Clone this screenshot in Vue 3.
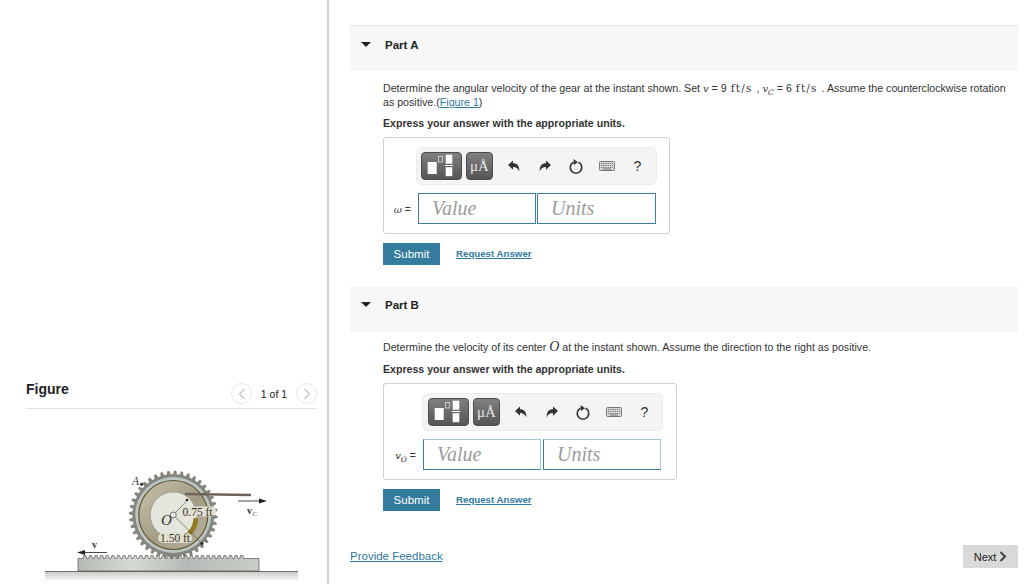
<script setup>
const parts = [
  { name: 'Part A', id: 'a', labelWidth: 34 },
  { name: 'Part B', id: 'b', labelWidth: 39 },
]

const cx = 133.3
const cy = 50

// gear outline: teeth round the wheel
function gearPath(count, root, tip) {
  let d = ''
  for (let i = 0; i < count; i++) {
    const step = (Math.PI * 2) / count
    const a = i * step
    const pts = [
      [root, a],
      [tip, a + step * 0.15],
      [tip, a + step * 0.4],
      [root, a + step * 0.55],
    ]
    pts.forEach(([r, t], n) => {
      const x = (cx + r * Math.cos(t)).toFixed(2)
      const y = (cy + r * Math.sin(t)).toFixed(2)
      d += (i === 0 && n === 0 ? 'M' : 'L') + x + ' ' + y + ' '
    })
  }
  return d + 'Z'
}

function rackPath() {
  let d = 'M38 93.5 L43 93.5 '
  for (let x = 43; x < 203; x += 5.6) {
    d += `L${(x + 0.8).toFixed(1)} 90.6 L${(x + 3).toFixed(1)} 90.6 L${(x + 3.8).toFixed(1)} 93.5 L${(x + 5.6).toFixed(1)} 93.5 `
  }
  return d + 'L219 93.5 L219 106 L38 106 Z'
}

const gear = gearPath(40, 40.5, 44)
const rack = rackPath()
</script>

<template>
  <div class="page">
    <aside class="left">
      <div class="figure-head">
        <span class="figure-title">Figure</span>
        <div class="pager">
          <span class="round">
            <svg width="8" height="12" viewBox="0 0 8 12"><path d="M6.5 1 L1.5 6 L6.5 11" fill="none" stroke="#c4c4c4" stroke-width="1.3" /></svg>
          </span>
          <span class="count">1 of 1</span>
          <span class="round">
            <svg width="8" height="12" viewBox="0 0 8 12"><path d="M1.5 1 L6.5 6 L1.5 11" fill="none" stroke="#c4c4c4" stroke-width="1.3" /></svg>
          </span>
        </div>
      </div>

      <svg class="figure" width="265" height="119" viewBox="0 0 265 119">
        <defs>
          <linearGradient id="rackFill" x1="0" x2="1" y1="0" y2="0">
            <stop offset="0" stop-color="#b4bab4" />
            <stop offset="0.3" stop-color="#d6dad4" />
            <stop offset="0.6" stop-color="#b5bbb6" />
            <stop offset="1" stop-color="#c9cdc8" />
          </linearGradient>
          <linearGradient id="rimFill" x1="0" x2="1" y1="0" y2="1">
            <stop offset="0" stop-color="#c7c1ab" />
            <stop offset="0.55" stop-color="#a39c85" />
            <stop offset="1" stop-color="#b9b5a2" />
          </linearGradient>
          <linearGradient id="groundFill" x1="0" x2="0" y1="0" y2="1">
            <stop offset="0" stop-color="#c4c6c2" />
            <stop offset="1" stop-color="#f4f4f2" />
          </linearGradient>
        </defs>

        <rect x="5" y="106" width="253" height="9" fill="url(#groundFill)" />
        <path d="M5 106.5 H258" stroke="#6f716d" stroke-width="1.2" />
        <path d="M12 109.5 H250" stroke="#e4e6e2" stroke-width="1" stroke-dasharray="2 5" />

        <path :d="gear" fill="#85877f" stroke="#5a5b54" stroke-width="0.4" />
        <circle :cx="cx" :cy="cy" r="38" fill="#bcc5c6" />
        <circle :cx="cx" :cy="cy" r="34.5" fill="url(#rimFill)" stroke="#5e5526" stroke-width="1.2" />
        <circle :cx="cx" :cy="cy" r="23" fill="#e4e5dd" stroke="#8a8672" stroke-width="0.5" />
        <path d="M153.5 53 A20.5 20.5 0 0 1 147 67.5 L150 71 A25.5 25.5 0 0 0 158.3 54 Z" fill="#8e7a1c" />

        <path :d="rack" fill="url(#rackFill)" stroke="#55574f" stroke-width="0.7" />

        <path d="M145 29 L211 30" stroke="#6d655c" stroke-width="2.4" />
        <path d="M133.3 50 L147 35.5 M133.3 50 L162 78.5" stroke="#4a4a44" stroke-width="0.6" />
        <circle cx="147" cy="35" r="1.3" fill="#222" />
        <circle cx="162" cy="78.5" r="1.5" fill="#222" />
        <circle cx="101.6" cy="19.3" r="1.5" fill="#222" />
        <circle :cx="cx" :cy="cy" r="3" fill="#e8e8e4" stroke="#444" stroke-width="0.7" />

        <rect x="141" y="41.5" width="35" height="10" rx="5" fill="#e2dfcf" />
        <rect x="118" y="68" width="34" height="10" rx="5" fill="#e2dfcf" />
        <text x="142.5" y="50.5" class="fig-text">0.75 ft</text>
        <text x="120" y="77" class="fig-text">1.50 ft</text>
        <text x="121" y="60" class="fig-text italic big">O</text>
        <text x="92" y="20" class="fig-text italic">A</text>

        <path d="M198 36 H222" stroke="#333" stroke-width="0.9" />
        <path d="M227 36 L219 33.5 V38.5 Z" fill="#222" />
        <text x="207" y="49" class="fig-v">v</text>
        <text x="212.5" y="51" class="fig-sub">C</text>

        <path d="M42 87.5 H67" stroke="#333" stroke-width="0.9" />
        <path d="M37 87.5 L45 85 V90 Z" fill="#222" />
        <text x="52" y="83" class="fig-v">v</text>
      </svg>
    </aside>

    <main class="right">
      <section v-for="part in parts" :key="part.id" class="part" :class="'part-' + part.id">
        <header class="part-head">
          <span class="caret"></span>
          <span class="part-name">{{ part.name }}</span>
        </header>

        <div class="part-body">
          <p v-if="part.id === 'a'" class="prompt">
            Determine the angular velocity of the gear at the instant shown. Set
            <i class="math">v</i> = 9 <span class="math unit">ft/s</span> , <i class="math">v<sub>C</sub></i> = 6
            <span class="math unit">ft/s</span> . Assume the counterclockwise rotation as positive.(<a class="link">Figure 1</a>)
          </p>
          <p v-else class="prompt">
            Determine the velocity of its center <i class="big-o">O</i> at the instant shown. Assume the direction to the right as positive.
          </p>
          <p class="express">Express your answer with the appropriate units.</p>

          <div class="answer-box">
            <div class="label-cell" :style="{ width: part.labelWidth + 'px' }"></div>
            <div class="toolbar">
              <button class="tool tool-template">
                <svg width="41" height="28" viewBox="0 0 41 28">
                  <rect x="6.7" y="10" width="9" height="12" fill="#fff" />
                  <rect x="17.5" y="4.5" width="4" height="5.5" fill="none" stroke="#ddd" stroke-width="0.8" />
                  <rect x="24.7" y="2.7" width="6.6" height="9" fill="#fff" />
                  <rect x="24" y="13" width="8" height="1" fill="#fff" />
                  <rect x="24.7" y="15.2" width="6.6" height="9" fill="#fff" />
                </svg>
              </button>
              <button class="tool tool-units">μÅ</button>
              <span class="icon">
                <svg width="14" height="14" viewBox="0 0 14 14"><path d="M1 6 L6 1.5 V4.3 C10 4.3 12.6 6.8 12.3 12.5 C11.2 9.6 9.4 8 6 8 V10.8 Z" fill="#333" /></svg>
              </span>
              <span class="icon">
                <svg width="14" height="14" viewBox="0 0 14 14"><path d="M13 6 L8 1.5 V4.3 C4 4.3 1.4 6.8 1.7 12.5 C2.8 9.6 4.6 8 8 8 V10.8 Z" fill="#333" /></svg>
              </span>
              <span class="icon">
                <svg width="16" height="17" viewBox="0 0 16 17">
                  <path d="M10.5 4.2 A5.8 5.8 0 1 1 5.5 4.2" fill="none" stroke="#333" stroke-width="1.6" />
                  <path d="M5.5 1 L10 4.2 L5.8 7 Z" fill="#333" />
                </svg>
              </span>
              <span class="icon">
                <svg width="16" height="10" viewBox="0 0 16 10">
                  <rect x="0.5" y="0.5" width="15" height="9" rx="1" fill="#d8d8d8" stroke="#777" />
                  <path d="M2 2.5 H14 M2 4.5 H14 M2 6.5 H14" stroke="#666" stroke-width="0.9" stroke-dasharray="1 0.8" />
                  <path d="M4 8 H12" stroke="#666" stroke-width="0.9" />
                </svg>
              </span>
              <span class="icon help">?</span>
            </div>

            <div class="label-cell symbol">
              <span v-if="part.id === 'a'"><i class="math">ω</i> =</span>
              <span v-else><i class="math">v<sub>O</sub></i> =</span>
            </div>
            <div class="fields">
              <div class="field">Value</div>
              <div class="field">Units</div>
            </div>
          </div>

          <div class="actions">
            <button class="submit">Submit</button>
            <a class="link request">Request Answer</a>
          </div>
        </div>
      </section>

      <footer class="foot">
        <a class="link feedback">Provide Feedback</a>
        <button class="next">
          Next
          <svg width="8" height="11" viewBox="0 0 8 11"><path d="M1.5 1 L6 5.5 L1.5 10" fill="none" stroke="#444" stroke-width="2" /></svg>
        </button>
      </footer>
    </main>
  </div>
</template>

<style>
html,
body {
  margin: 0;
  background: #fff;
}
</style>

<style scoped>
.page {
  display: flex;
  width: 1024px;
  height: 584px;
  overflow: hidden;
  font-family: "Liberation Sans", Arial, sans-serif;
  color: #222;
}

.left {
  box-sizing: border-box;
  width: 329px;
  flex: none;
  padding: 379px 0 0 26px;
  border-right: 2px solid #c3d5e6;
}

.figure-head {
  display: flex;
  justify-content: space-between;
  align-items: flex-start;
  box-sizing: border-box;
  width: 291px;
  height: 30px;
  padding-top: 1px;
  border-bottom: 1px solid #e2e2e2;
}

.figure-title {
  font-size: 14px;
  font-weight: bold;
  line-height: 18px;
}

.pager {
  display: flex;
  align-items: center;
  margin-top: 3px;
}

.round {
  display: flex;
  align-items: center;
  justify-content: center;
  box-sizing: border-box;
  width: 21px;
  height: 21px;
  border: 1px solid #e6e6e6;
  border-radius: 50%;
}

.count {
  width: 44px;
  text-align: center;
  font-size: 10.5px;
}

.figure {
  display: block;
  margin: 56px 0 0 14px;
}

.fig-text {
  font-family: "Liberation Serif", serif;
  font-size: 11.5px;
  fill: #333;
}

.fig-text.italic {
  font-style: italic;
}

.fig-text.big {
  font-size: 15px;
}

.fig-v {
  font-family: "Liberation Serif", serif;
  font-weight: bold;
  font-size: 10px;
  fill: #333;
}

.fig-sub {
  font-family: "Liberation Serif", serif;
  font-style: italic;
  font-size: 7px;
  fill: #333;
}

.right {
  width: 668px;
  margin-left: 21px;
  padding-top: 25px;
}

.part-head {
  display: flex;
  align-items: flex-start;
  box-sizing: border-box;
  height: 46px;
  padding: 12px 0 0 11px;
  background: #f7f7f7;
  border-top: 1px solid #e5e5e5;
}

.part-b {
  margin-top: 22px;
}

.part-b .part-head {
  height: 45px;
  padding-top: 11px;
  border-top: 0;
}

.caret {
  width: 0;
  height: 0;
  margin: 4px 14px 0 0;
  border-left: 5px solid transparent;
  border-right: 5px solid transparent;
  border-top: 5px solid #222;
}

.part-name {
  font-size: 11.5px;
  font-weight: bold;
  line-height: 14px;
}

.part-body {
  padding: 10px 0 0 33px;
}

.part-b .part-body {
  padding-top: 8px;
}

.prompt {
  margin: 0;
  padding-right: 8px;
  font-size: 10.65px;
  line-height: 14px;
  color: #333;
}

.express {
  margin: 7px 0;
  font-size: 10.6px;
  line-height: 14px;
  font-weight: bold;
  color: #333;
}

.part-b .express {
  margin: 8px 0 7px;
}

.math {
  font-family: "DejaVu Serif", serif;
  font-size: 10px;
  line-height: 1;
}

.unit {
  margin: 0 1px;
  font-size: 10.5px;
  letter-spacing: 1.2px;
}

.big-o {
  font-family: "Liberation Serif", serif;
  font-size: 14px;
  line-height: 10px;
}

.math sub {
  position: relative;
  top: 3px;
  vertical-align: baseline;
  font-size: 7.5px;
  line-height: 0;
}

.link {
  color: #2f7a9f;
  text-decoration: underline;
}

.answer-box {
  display: inline-grid;
  grid-template-columns: auto auto;
  box-sizing: border-box;
  padding: 9px 12px 9px 0;
  border: 1px solid #cfcfcf;
  border-radius: 3px;
  vertical-align: top;
}

.part-b .answer-box {
  padding-right: 13px;
}

.toolbar {
  display: flex;
  align-items: center;
  box-sizing: border-box;
  width: 241px;
  height: 38px;
  margin-left: -2px;
  padding-left: 4px;
  background: #f4f4f4;
  border: 1px solid #ececec;
  border-radius: 6px;
}

.part-b .toolbar {
  margin-left: -1px;
  padding-left: 5px;
}

.tool {
  height: 28px;
  padding: 0;
  border: 1px solid #4c4c4c;
  border-radius: 4px;
  background: linear-gradient(#808080, #555);
  color: #e8e8e8;
}

.tool-template {
  width: 41px;
  display: flex;
}

.tool-template svg {
  margin: -1px;
}

.tool-units {
  width: 27px;
  margin: 0 5px 0 4px;
  font-family: "Liberation Serif", serif;
  font-size: 15px;
}

.icon {
  display: flex;
  align-items: center;
  justify-content: center;
  width: 31px;
  height: 20px;
}

.help {
  font-size: 14px;
  color: #333;
}

.label-cell {
  height: 0;
}

.symbol {
  display: flex;
  align-items: center;
  justify-content: flex-end;
  height: 31px;
  margin-top: 8px;
  padding-right: 7px;
  font-size: 10.5px;
  color: #333;
}

.fields {
  display: flex;
  gap: 1px;
  margin-top: 8px;
}

.part-b .fields {
  gap: 2px;
}

.field {
  box-sizing: border-box;
  width: 118px;
  height: 31px;
  padding-left: 13px;
  border: 1px solid #3c7d9b;
  font-family: "Liberation Serif", serif;
  font-style: italic;
  font-size: 20px;
  line-height: 28px;
  color: #9b9b9b;
}

.field + .field {
  width: 119px;
}

.part-b .field {
  border-color: #a8c6d4 #a8c6d4 #3c7d9b #3c7d9b;
}

.part-b .field + .field {
  width: 118px;
}

.actions {
  display: flex;
  align-items: center;
  margin-top: 9px;
}

.submit {
  width: 57px;
  height: 22px;
  padding: 0;
  border: 0;
  background: #337c9e;
  color: #fff;
  font-family: "Liberation Sans", Arial, sans-serif;
  font-size: 11.5px;
}

.request {
  margin: 0 0 2px 16px;
  font-size: 9.7px;
  font-weight: bold;
}

.foot {
  display: flex;
  justify-content: space-between;
  align-items: center;
  margin-top: 34px;
}

.feedback {
  margin-bottom: 1px;
  font-size: 11.5px;
}

.next {
  display: flex;
  align-items: center;
  justify-content: center;
  gap: 3px;
  width: 55px;
  height: 23px;
  padding: 0;
  border: 0;
  background: #d9d9d9;
  color: #222;
  font-family: "Liberation Sans", Arial, sans-serif;
  font-size: 11px;
}
</style>
